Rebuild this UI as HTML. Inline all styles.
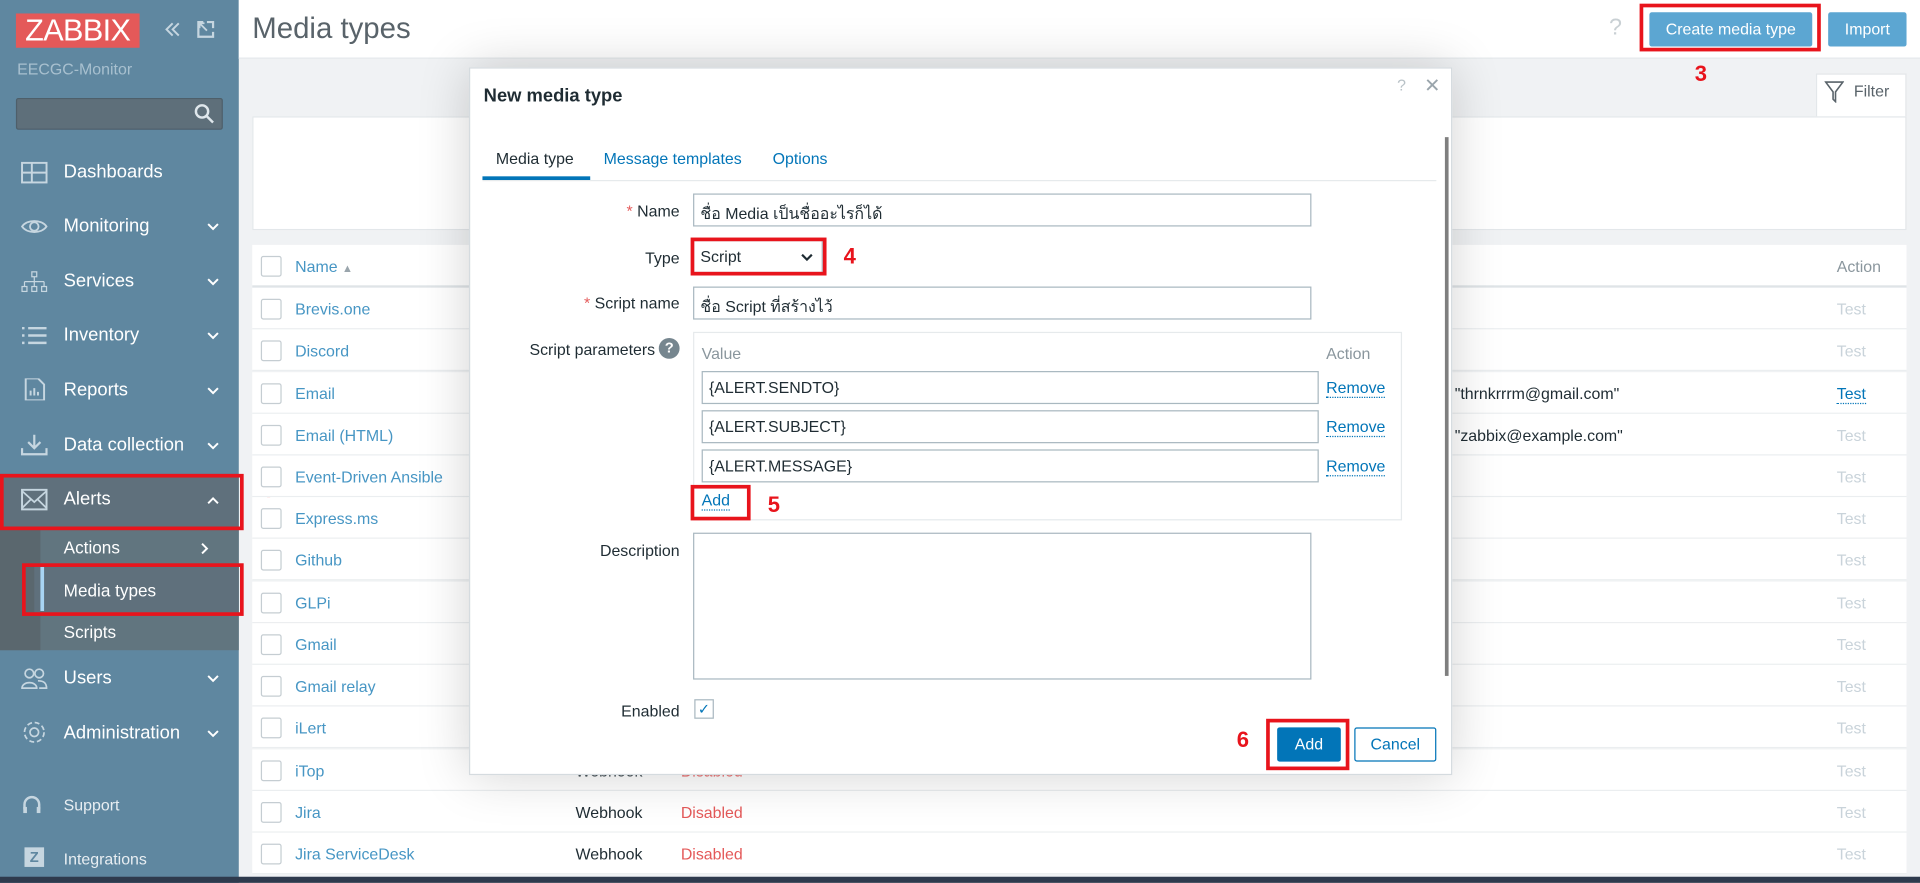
<!DOCTYPE html>
<html><head><meta charset="utf-8">
<style>
*{box-sizing:border-box;margin:0;padding:0}
html,body{width:1920px;height:883px;overflow:hidden;background:#f2f3f5}
#f{position:absolute;left:0;top:0;width:1568px;height:721px;transform:scale(1.22449);transform-origin:0 0;font-family:"Liberation Sans",Arial,sans-serif;font-size:13px;color:#1f2c33;background:#f0f2f4}
.a{position:absolute}
.sb{left:0;top:0;width:195px;height:721px;background:#5f87a0}
.mi{position:absolute;left:52px;color:#fff;font-size:15px}
.ic{position:absolute;left:17px;width:22px;height:18px}
.chev{position:absolute;left:169px;width:10px;height:7px}
.red{border:3px solid #e8141c;position:absolute}
.num{position:absolute;color:#e8141c;font-weight:bold;font-size:18px}
.row{position:absolute;left:206px;width:1351px;height:34px;background:#fff;border-bottom:1px solid #ebeef0}
.row .cb{position:absolute;left:7px;top:9px;width:17px;height:17px;border:1px solid #c5cdd2;border-radius:2px;background:#fff}
.row .n{position:absolute;left:35px;top:10px;color:#4796c4}
.row .t{position:absolute;left:1294px;top:10px;color:#c9d3da}
.inp{position:absolute;border:1px solid #a9b8c0;background:#fff;height:27px;padding:5px 5px;font-size:13px;font-family:"Liberation Sans",sans-serif}
.lbl{position:absolute;text-align:right;width:170px;left:385px}
.rm{position:absolute;left:1083px;color:#0275b8;border-bottom:1px dotted #0275b8;line-height:14px}
</style></head><body><div id="f">
<div class="a sb"></div>
<div class="a" style="left:13px;top:11px;width:101px;height:28px;background:#e45959;color:#fff;font-size:25px;line-height:29px;text-align:center;letter-spacing:-0.5px">ZABBIX</div>
<svg class="a" style="left:134px;top:17px" width="14" height="14"><path d="M7 2L2 7l5 5M12 2L7 7l5 5" fill="none" stroke="#c6d6e0" stroke-width="1.6"/></svg>
<svg class="a" style="left:160px;top:16px" width="16" height="16"><path d="M6 2H2v12h12V10M2 14" fill="none" stroke="#c6d6e0" stroke-width="1.8"/><path d="M3 3l6 6M3 3v4M3 3h4" fill="none" stroke="#c6d6e0" stroke-width="1.5"/><path d="M9 2h5v5" fill="none" stroke="#c6d6e0" stroke-width="1.8"/></svg>
<div class="a" style="left:14px;top:49px;color:#a8c0cf;font-size:13px">EECGC-Monitor</div>
<div class="a" style="left:13px;top:80px;width:169px;height:26px;background:#5e6f7a;border:1px solid #4e5f6a;border-radius:2px"></div>
<svg class="a" style="left:158px;top:84px" width="18" height="18"><circle cx="7" cy="7" r="5" fill="none" stroke="#dfe7ec" stroke-width="2"/><path d="M11 11l5 5" stroke="#dfe7ec" stroke-width="2"/></svg>

<svg class="ic" style="top:132px" viewBox="0 0 22 18"><rect x="1" y="1" width="20" height="16" fill="none" stroke="#c6d6e0" stroke-width="1.6"/><path d="M1 9h20M9 1v16" stroke="#c6d6e0" stroke-width="1.6"/></svg>
<div class="mi" style="top:132px">Dashboards</div>
<svg class="ic" style="top:176px" viewBox="0 0 22 18"><path d="M1 9C5 3 17 3 21 9 17 15 5 15 1 9z" fill="none" stroke="#c6d6e0" stroke-width="1.5"/><circle cx="11" cy="9" r="3.5" fill="none" stroke="#c6d6e0" stroke-width="1.5"/></svg>
<div class="mi" style="top:176px">Monitoring</div><svg class="chev" style="top:182px"><path d="M1 1l4 4 4-4" fill="none" stroke="#fff" stroke-width="1.6"/></svg>
<svg class="ic" style="top:221px" viewBox="0 0 22 18"><rect x="9" y="1" width="4" height="4" fill="none" stroke="#c6d6e0"/><path d="M11 5v4M3 9h16M3 9v4M11 9v4M19 9v4" stroke="#c6d6e0"/><rect x="1" y="13" width="4" height="4" fill="none" stroke="#c6d6e0"/><rect x="9" y="13" width="4" height="4" fill="none" stroke="#c6d6e0"/><rect x="17" y="13" width="4" height="4" fill="none" stroke="#c6d6e0"/></svg>
<div class="mi" style="top:221px">Services</div><svg class="chev" style="top:227px"><path d="M1 1l4 4 4-4" fill="none" stroke="#fff" stroke-width="1.6"/></svg>
<svg class="ic" style="top:265px" viewBox="0 0 22 18"><path d="M1 3h2M6 3h15M1 9h2M6 9h15M1 15h2M6 15h15" stroke="#c6d6e0" stroke-width="2"/></svg>
<div class="mi" style="top:265px">Inventory</div><svg class="chev" style="top:271px"><path d="M1 1l4 4 4-4" fill="none" stroke="#fff" stroke-width="1.6"/></svg>
<svg class="ic" style="top:309px" viewBox="0 0 22 18"><path d="M4 0h10l5 5v13H4z" fill="none" stroke="#c6d6e0" stroke-width="1.6"/><path d="M8 14v-4M11 14V8M14 14v-3" stroke="#c6d6e0" stroke-width="1.6"/></svg>
<div class="mi" style="top:310px">Reports</div><svg class="chev" style="top:316px"><path d="M1 1l4 4 4-4" fill="none" stroke="#fff" stroke-width="1.6"/></svg>
<svg class="ic" style="top:354px" viewBox="0 0 22 18"><path d="M11 1v10M6 7l5 5 5-5M1 12v5h20v-5" fill="none" stroke="#c6d6e0" stroke-width="1.8"/></svg>
<div class="mi" style="top:355px">Data collection</div><svg class="chev" style="top:361px"><path d="M1 1l4 4 4-4" fill="none" stroke="#fff" stroke-width="1.6"/></svg>
<div class="a" style="left:0;top:387px;width:195px;height:45px;background:#5f707c"></div>
<svg class="ic" style="top:399px" viewBox="0 0 22 18"><rect x="1" y="1" width="20" height="16" fill="none" stroke="#c6d6e0" stroke-width="1.6"/><path d="M1 2l10 9 10-9M1 16l7-7M21 16l-7-7" fill="none" stroke="#c6d6e0" stroke-width="1.4"/></svg>
<div class="mi" style="top:399px">Alerts</div><svg class="chev" style="top:405px"><path d="M1 6l4-4 4 4" fill="none" stroke="#fff" stroke-width="1.6"/></svg>
<div class="a" style="left:0;top:432px;width:195px;height:99px;background:#61757f"></div>
<div class="a" style="left:0;top:432px;width:33px;height:99px;background:#5a676e"></div>
<div class="mi" style="top:439px;font-size:14px">Actions</div><svg class="a" style="left:164px;top:443px" width="7" height="10"><path d="M1 1l4 4-4 4" fill="none" stroke="#fff" stroke-width="1.6"/></svg>
<div class="a" style="left:28px;top:462px;width:167px;height:38px;background:#5f707c"></div>
<div class="a" style="left:33px;top:463px;width:3px;height:36px;background:#a8d4f2"></div>
<div class="mi" style="top:474px;font-size:14px">Media types</div>
<div class="mi" style="top:508px;font-size:14px">Scripts</div>
<svg class="ic" style="top:545px" viewBox="0 0 22 18"><circle cx="7" cy="5" r="3.5" fill="none" stroke="#c6d6e0" stroke-width="1.4"/><circle cx="15" cy="5" r="3.5" fill="none" stroke="#c6d6e0" stroke-width="1.4"/><path d="M1 17c0-6 12-6 12 0zM14 11c5 0 7 2 7 6h-6" fill="none" stroke="#c6d6e0" stroke-width="1.4"/></svg>
<div class="mi" style="top:545px">Users</div><svg class="chev" style="top:551px"><path d="M1 1l4 4 4-4" fill="none" stroke="#fff" stroke-width="1.6"/></svg>
<svg class="ic" style="top:588px;height:20px" viewBox="0 0 22 20"><circle cx="11" cy="10" r="3.5" fill="none" stroke="#c6d6e0" stroke-width="1.4"/><circle cx="11" cy="10" r="8" fill="none" stroke="#c6d6e0" stroke-width="1.4" stroke-dasharray="4 2.3"/></svg>
<div class="mi" style="top:590px">Administration</div><svg class="chev" style="top:596px"><path d="M1 1l4 4 4-4" fill="none" stroke="#fff" stroke-width="1.6"/></svg>
<svg class="ic" style="top:649px;width:18px" viewBox="0 0 18 18"><path d="M3 12V8a6 6 0 0112 0v4" fill="none" stroke="#c6d6e0" stroke-width="2"/><rect x="2" y="10" width="3" height="5" fill="#c6d6e0"/><rect x="13" y="10" width="3" height="5" fill="#c6d6e0"/></svg>
<div class="mi" style="top:650px;font-size:13px;color:#e8eef2">Support</div>
<div class="a" style="left:20px;top:692px;width:16px;height:16px;background:#c6d6e0;color:#5f87a0;font-weight:bold;font-size:12px;text-align:center;line-height:16px">Z</div>
<div class="mi" style="top:694px;font-size:13px;color:#e8eef2">Integrations</div>
<div class="red" style="left:0;top:387px;width:199px;height:46px"></div>
<div class="red" style="left:18px;top:460px;width:181px;height:43px"></div>
<div class="num" style="left:214px;top:397px">1</div>
<div class="num" style="left:208px;top:472px">2</div>

<div class="a" style="left:195px;top:0;width:1373px;height:48px;background:#fff;border-bottom:1px solid #e3e7ea"></div>
<div class="a" style="left:206px;top:10px;font-size:24px;color:#59636a">Media types</div>
<div class="a" style="left:1314px;top:12px;font-size:19px;color:#c9d0d4">?</div>
<div class="a" style="left:1347px;top:10px;width:133px;height:28px;background:#5ca6d2;color:#fff;line-height:28px;text-align:center;border-radius:2px">Create media type</div>
<div class="red" style="left:1339px;top:3px;width:148px;height:39px"></div>
<div class="a" style="left:1493px;top:10px;width:64px;height:28px;background:#5ca6d2;color:#fff;line-height:28px;text-align:center;border-radius:2px">Import</div>
<div class="num" style="left:1384px;top:50px">3</div>
<div class="a" style="left:1483px;top:60px;width:74px;height:36px;background:#fff;border:1px solid #e3e7ea;border-bottom:none"></div>
<svg class="a" style="left:1490px;top:66px" width="16" height="18"><path d="M1 1h14L9 9v8l-2-2V9z" fill="none" stroke="#59636a" stroke-width="1.3"/></svg>
<div class="a" style="left:1514px;top:67px;color:#59636a">Filter</div>
<div class="a" style="left:206px;top:95px;width:1351px;height:93px;background:#fff;border:1px solid #e3e7ea"></div>
<div class="a" style="left:206px;top:200px;width:1351px;height:35px;background:#fff;border-bottom:2px solid #dfe4e7"></div>
<div class="a" style="left:213px;top:209px;width:17px;height:17px;border:1px solid #c5cdd2;border-radius:2px"></div>
<div class="a" style="left:241px;top:210px;color:#4796c4">Name <span style="font-size:9px;color:#9aa5ac">▲</span></div>
<div class="a" style="left:1500px;top:210px;color:#8a969d">Action</div>

<div class="row" style="top:235px"><div class="cb"></div><div class="n">Brevis.one</div><div class="t">Test</div></div>
<div class="row" style="top:269px"><div class="cb"></div><div class="n">Discord</div><div class="t">Test</div></div>
<div class="row" style="top:304px"><div class="cb"></div><div class="n">Email</div><div class="a" style="left:982px;top:10px;color:#1f2c33">"thrnkrrrm@gmail.com"</div><div class="t" style="color:#0275b8;border-bottom:1px dotted #0275b8">Test</div></div>
<div class="row" style="top:338px"><div class="cb"></div><div class="n">Email (HTML)</div><div class="a" style="left:982px;top:10px">"zabbix@example.com"</div><div class="t">Test</div></div>
<div class="row" style="top:372px"><div class="cb"></div><div class="n">Event-Driven Ansible</div><div class="t">Test</div></div>
<div class="row" style="top:406px"><div class="cb"></div><div class="n">Express.ms</div><div class="t">Test</div></div>
<div class="row" style="top:440px"><div class="cb"></div><div class="n">Github</div><div class="t">Test</div></div>
<div class="row" style="top:475px"><div class="cb"></div><div class="n">GLPi</div><div class="t">Test</div></div>
<div class="row" style="top:509px"><div class="cb"></div><div class="n">Gmail</div><div class="t">Test</div></div>
<div class="row" style="top:543px"><div class="cb"></div><div class="n">Gmail relay</div><div class="t">Test</div></div>
<div class="row" style="top:577px"><div class="cb"></div><div class="n">iLert</div><div class="t">Test</div></div>
<div class="row" style="top:612px"><div class="cb"></div><div class="n">iTop</div><div class="a" style="left:264px;top:10px">Webhook</div><div class="a" style="left:350px;top:10px;color:#e45959">Disabled</div><div class="t">Test</div></div>
<div class="row" style="top:646px"><div class="cb"></div><div class="n">Jira</div><div class="a" style="left:264px;top:10px">Webhook</div><div class="a" style="left:350px;top:10px;color:#e45959">Disabled</div><div class="t">Test</div></div>
<div class="row" style="top:680px"><div class="cb"></div><div class="n">Jira ServiceDesk</div><div class="a" style="left:264px;top:10px">Webhook</div><div class="a" style="left:350px;top:10px;color:#e45959">Disabled</div><div class="t">Test</div></div>
<div class="a" style="left:0;top:716px;width:1568px;height:5px;background:#2e3a4d"></div>

<div class="a" style="left:383px;top:55px;width:803px;height:578px;background:#fff;border:1px solid #d5dbdf;box-shadow:0 0 40px rgba(0,0,0,0.18)"></div>
<div class="a" style="left:395px;top:70px;font-size:15px;font-weight:bold;color:#1f2c33">New media type</div>
<div class="a" style="left:1141px;top:62px;color:#b9c2c7;font-size:13px">?</div>
<div class="a" style="left:1163px;top:60px;color:#9aa5ac;font-size:16px">✕</div>
<div class="a" style="left:1180px;top:112px;width:3px;height:440px;background:#7f7f7f"></div>
<div class="a" style="left:394px;top:147px;width:779px;height:1px;background:#e6eaec"></div>
<div class="a" style="left:394px;top:144px;width:88px;height:3px;background:#0275b8"></div>
<div class="a" style="left:405px;top:122px">Media type</div>
<div class="a" style="left:493px;top:122px;color:#0275b8">Message templates</div>
<div class="a" style="left:631px;top:122px;color:#0275b8">Options</div>

<div class="lbl" style="top:165px"><span style="color:#e45959">*</span> Name</div>
<div class="inp" style="left:566px;top:158px;width:505px">ชื่อ Media เป็นชื่ออะไรก็ได้</div>
<div class="lbl" style="top:203px">Type</div>
<div class="inp" style="left:566px;top:196px;width:106px">Script<svg style="position:absolute;right:7px;top:10px" width="10" height="7"><path d="M1 1l4 4 4-4" fill="none" stroke="#1f2c33" stroke-width="1.8"/></svg></div>
<div class="red" style="left:564px;top:194px;width:111px;height:31px"></div>
<div class="num" style="left:689px;top:199px">4</div>
<div class="lbl" style="top:240px"><span style="color:#e45959">*</span> Script name</div>
<div class="inp" style="left:566px;top:234px;width:505px">ชื่อ Script ที่สร้างไว้</div>
<div class="lbl" style="top:278px;width:150px">Script parameters</div>
<div class="a" style="left:538px;top:276px;width:17px;height:17px;border-radius:50%;background:#76868f;color:#fff;font-weight:bold;font-size:12px;text-align:center;line-height:17px">?</div>
<div class="a" style="left:566px;top:271px;width:579px;height:154px;border:1px solid #e6eaec"></div>
<div class="a" style="left:573px;top:281px;color:#8a969d">Value</div>
<div class="a" style="left:1083px;top:281px;color:#8a969d">Action</div>
<div class="inp" style="left:573px;top:303px;width:504px">{ALERT.SENDTO}</div><div class="rm" style="top:310px">Remove</div>
<div class="inp" style="left:573px;top:335px;width:504px">{ALERT.SUBJECT}</div><div class="rm" style="top:342px">Remove</div>
<div class="inp" style="left:573px;top:367px;width:504px">{ALERT.MESSAGE}</div><div class="rm" style="top:374px">Remove</div>
<div class="a" style="left:573px;top:402px;color:#0275b8;border-bottom:1px dotted #0275b8;line-height:14px">Add</div>
<div class="red" style="left:564px;top:396px;width:49px;height:29px"></div>
<div class="num" style="left:627px;top:402px">5</div>
<div class="lbl" style="top:442px">Description</div>
<div class="a" style="left:566px;top:435px;width:505px;height:120px;border:1px solid #a9b8c0"></div>
<div class="lbl" style="top:573px">Enabled</div>
<div class="a" style="left:567px;top:571px;width:16px;height:16px;border:1px solid #a9b8c0;color:#0275b8;font-size:12px;text-align:center;line-height:14px">✓</div>
<div class="num" style="left:1010px;top:594px">6</div>
<div class="red" style="left:1034px;top:587px;width:68px;height:42px"></div>
<div class="a" style="left:1043px;top:594px;width:52px;height:28px;background:#0275b8;color:#fff;line-height:28px;text-align:center;border-radius:2px">Add</div>
<div class="a" style="left:1106px;top:594px;width:67px;height:28px;border:1px solid #0275b8;color:#0275b8;line-height:26px;text-align:center;border-radius:2px">Cancel</div>
</div></body></html>
